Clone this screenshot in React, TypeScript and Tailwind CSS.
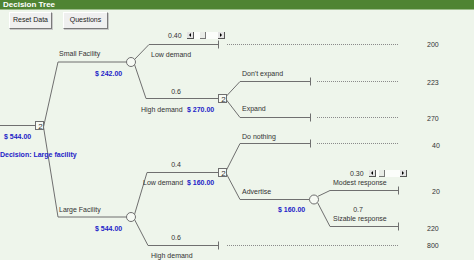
import React from "react";

const FONT = '"Liberation Sans", Arial, sans-serif';
const LINE = "#6f6f6f";

type Label = { x: number; y: number; text: string; blue?: boolean; anchor?: "start" | "middle" };

// y values are the vertical centre of the text in page coordinates
const labels: Label[] = [
  { x: 168, y: 35, text: "0.40" },
  { x: 59, y: 53, text: "Small Facility" },
  { x: 151, y: 54, text: "Low demand" },
  { x: 95, y: 73, text: "$ 242.00", blue: true },
  { x: 176, y: 91, text: "0.6", anchor: "middle" },
  { x: 141, y: 109, text: "High demand" },
  { x: 187, y: 109, text: "$ 270.00", blue: true },
  { x: 242, y: 73, text: "Don't expand" },
  { x: 242, y: 108, text: "Expand" },
  { x: 4, y: 136, text: "$ 544.00", blue: true },
  { x: 0, y: 154, text: "Decision: Large facility", blue: true },
  { x: 242, y: 136, text: "Do nothing" },
  { x: 176, y: 164, text: "0.4", anchor: "middle" },
  { x: 143, y: 182, text: "Low demand" },
  { x: 187, y: 182, text: "$ 160.00", blue: true },
  { x: 242, y: 191, text: "Advertise" },
  { x: 278, y: 209, text: "$ 160.00", blue: true },
  { x: 350, y: 173, text: "0.30" },
  { x: 333, y: 182, text: "Modest response" },
  { x: 358, y: 209, text: "0.7", anchor: "middle" },
  { x: 333, y: 218, text: "Sizable response" },
  { x: 59, y: 209, text: "Large Facility" },
  { x: 95, y: 228, text: "$ 544.00", blue: true },
  { x: 176, y: 237, text: "0.6", anchor: "middle" },
  { x: 151, y: 255, text: "High demand" },
  { x: 427, y: 44, text: "200" },
  { x: 427, y: 82, text: "223" },
  { x: 427, y: 118, text: "270" },
  { x: 432, y: 145, text: "40" },
  { x: 432, y: 191, text: "20" },
  { x: 427, y: 228, text: "220" },
  { x: 427, y: 245, text: "800" },
];

const branches = [
  "M0 125.5 H35.5",
  "M43.5 127 L58 62 H126.5",
  "M43.5 127 L58 217 H126.5",
  "M134.5 59.5 L149 44.5 H218",
  "M134.5 64.5 L146 98.5 H218.5",
  "M226.5 96 L240 81.5 H310",
  "M226.5 100 L240 117.5 H310",
  "M134.5 214.5 L147 172.5 H218.5",
  "M134.5 219.5 L148 245.5 H218",
  "M226.5 170 L240 143.5 H310",
  "M226.5 174 L240 199.5 H309.5",
  "M317.5 196.5 L330 190.5 H398",
  "M317.5 202.5 L330 226.5 H398",
];

const terminals = [
  { x: 218.5, y: 44.5 },
  { x: 310.5, y: 81.5 },
  { x: 310.5, y: 117.5 },
  { x: 310.5, y: 143.5 },
  { x: 218.5, y: 245.5 },
  { x: 398.5, y: 190.5 },
  { x: 398.5, y: 226.5 },
];

const dotted = [
  { x1: 227, x2: 398, y: 44.5 },
  { x1: 317, x2: 398, y: 81.5 },
  { x1: 317, x2: 398, y: 117.5 },
  { x1: 317, x2: 398, y: 143.5 },
  { x1: 227, x2: 398, y: 245.5 },
];

function ArrowButton({ dir }: { dir: "left" | "right" }) {
  return (
    <div className="flex h-[7px] w-[7px] items-center justify-center border-r border-b border-[#555] bg-[#e4e4e4]">
      <div
        className={
          dir === "left"
            ? "h-0 w-0 border-y-[2px] border-r-[2px] border-y-transparent border-r-black"
            : "h-0 w-0 border-y-[2px] border-l-[2px] border-y-transparent border-l-black"
        }
      />
    </div>
  );
}

function Scroller({ className, thumbGap }: { className: string; thumbGap: string }) {
  return (
    <div className={`absolute flex h-[7px] w-[38px] bg-[#fbfdfa] ${className}`}>
      <ArrowButton dir="left" />
      <div className={`h-[7px] w-[6px] border-r border-b border-[#777] bg-[#e9ece7] ${thumbGap}`} />
      <div className="flex-1" />
      <ArrowButton dir="right" />
    </div>
  );
}

export default function App() {
  return (
    <div className="flex h-[260px] w-[474px] flex-col overflow-hidden bg-[#eef5eb]" style={{ fontFamily: FONT }}>
      <div className="h-[10px] border-b border-[#9dbd8c] bg-[#4f8433] pl-[3px] text-[8px] leading-[9px] font-bold text-white">
        Decision Tree
      </div>
      <div className="flex h-[22px] gap-[11px] pt-[2px] pl-[9px]">
        <button className="h-[17px] w-[43px] border border-t-white border-l-white border-r-[#7a7a7a] border-b-[#7a7a7a] bg-[#efefef] text-[7px] text-[#222] shadow-[1px_1px_0_#c8c8c8]">
          Reset Data
        </button>
        <button className="h-[17px] w-[45px] border border-t-white border-l-white border-r-[#7a7a7a] border-b-[#7a7a7a] bg-[#efefef] text-[7px] text-[#222] shadow-[1px_1px_0_#c8c8c8]">
          Questions
        </button>
      </div>
      <div className="relative h-[228px]">
        <svg className="absolute inset-0" width={474} height={228} viewBox="0 32 474 228">
          {branches.map((d) => (
            <path key={d} d={d} fill="none" stroke={LINE} strokeWidth={1} />
          ))}
          {dotted.map((l) => (
            <line key={`${l.x1}-${l.y}`} x1={l.x1} x2={l.x2} y1={l.y} y2={l.y} stroke="#8a8a8a" strokeWidth={1} strokeDasharray="1 1" />
          ))}
          {terminals.map((t) => (
            <line key={`${t.x}-${t.y}`} x1={t.x} x2={t.x} y1={t.y - 4} y2={t.y + 4} stroke={LINE} strokeWidth={1} />
          ))}
          {/* decision nodes */}
          {[
            { x: 35.5, y: 121.5 },
            { x: 218.5, y: 94.5 },
            { x: 218.5, y: 168.5 },
          ].map((n) => (
            <g key={`${n.x}-${n.y}`}>
              <rect x={n.x} y={n.y} width={8} height={8} fill="#f6faf4" stroke={LINE} strokeWidth={1} />
              <text x={n.x + 5} y={n.y + 7} fontSize={8} fontFamily={FONT} fill="#333" textAnchor="middle">
                2
              </text>
            </g>
          ))}
          {/* chance nodes */}
          {[
            { x: 131, y: 62 },
            { x: 131, y: 217 },
            { x: 314, y: 199.5 },
          ].map((c) => (
            <circle key={`${c.x}-${c.y}`} cx={c.x} cy={c.y} r={4.5} fill="#f6faf4" stroke={LINE} strokeWidth={1} />
          ))}
          {labels.map((l, i) => (
            <text
              key={i}
              x={l.x}
              y={l.y + 2.5}
              fontSize={7}
              fontFamily={FONT}
              fontWeight={l.blue ? 700 : 400}
              fill={l.blue ? "#2323c8" : "#333"}
              textAnchor={l.anchor ?? "start"}
            >
              {l.text}
            </text>
          ))}
        </svg>
        <Scroller className="top-[0px] left-[187px]" thumbGap="ml-[6px]" />
        <Scroller className="top-[138px] left-[369px]" thumbGap="ml-[3px]" />
      </div>
    </div>
  );
}
